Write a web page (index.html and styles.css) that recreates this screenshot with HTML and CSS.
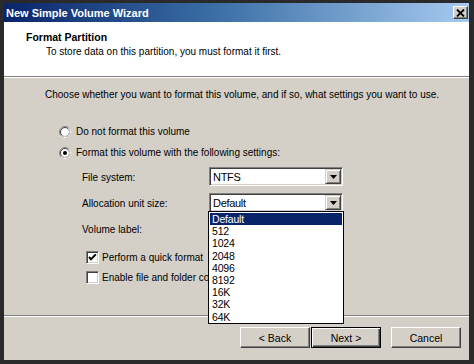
FILE: index.html
```html
<!DOCTYPE html>
<html lang="en">
  <head>
    <meta charset="UTF-8" />
    <title>New Simple Volume Wizard</title>
    <link rel="stylesheet" href="styles.css">
  </head>
  <body>
    <div class="window">
      <div class="titlebar">
        <span class="title">New Simple Volume Wizard</span>
        <span class="close">
          <svg width="9" height="8" viewBox="0 0 9 8"><path d="M1 0.5l7 7M8 0.5l-7 7" stroke="#000" stroke-width="1.8" /></svg>
        </span>
      </div>

      <div class="header">
        <div class="header-title">Format Partition</div>
        <div class="header-sub">To store data on this partition, you must format it first.</div>
      </div>

      <div class="content">
        <p class="intro">Choose whether you want to format this volume, and if so, what settings you want to use.</p>

        <div class="radio-row">
          <svg class="radio" width="12" height="12" viewBox="0 0 12 12">
            <circle cx="6" cy="6" r="5.5" fill="#fff" stroke="#808080" />
            <path d="M9.9 2.1A5.5 5.5 0 0 1 2.1 9.9" fill="none" stroke="#fff" />
            <circle cx="6" cy="6" r="4.5" fill="none" stroke="#404040" />
            <path d="M9.2 2.8A4.5 4.5 0 0 1 2.8 9.2" fill="none" stroke="#d4d0c8" />
          </svg>
          <span>Do not format this volume</span>
        </div>
        <div class="radio-row">
          <svg class="radio" width="12" height="12" viewBox="0 0 12 12">
            <circle cx="6" cy="6" r="5.5" fill="#fff" stroke="#808080" />
            <path d="M9.9 2.1A5.5 5.5 0 0 1 2.1 9.9" fill="none" stroke="#fff" />
            <circle cx="6" cy="6" r="4.5" fill="none" stroke="#404040" />
            <path d="M9.2 2.8A4.5 4.5 0 0 1 2.8 9.2" fill="none" stroke="#d4d0c8" />
            <circle cx="6" cy="6" r="2" fill="#000" />
          </svg>
          <span>Format this volume with the following settings:</span>
        </div>

        <div class="settings">
          <label>File system:</label>
          <div class="combo">
            <span class="combo-text">NTFS</span>
            <span class="combo-btn"><svg width="7" height="4" viewBox="0 0 7 4"><path d="M0 0h7L3.5 4z" fill="#000" /></svg></span>
          </div>

          <label>Allocation unit size:</label>
          <div class="combo">
            <span class="combo-text">Default</span>
            <span class="combo-btn"><svg width="7" height="4" viewBox="0 0 7 4"><path d="M0 0h7L3.5 4z" fill="#000" /></svg></span>
            <ul class="dropdown">
              <li class="selected">Default</li>
              <li>512</li>
              <li>1024</li>
              <li>2048</li>
              <li>4096</li>
              <li>8192</li>
              <li>16K</li>
              <li>32K</li>
              <li>64K</li>
            </ul>
          </div>

          <label>Volume label:</label>
          <div class="textbox"></div>
        </div>

        <div class="check-row first">
          <span class="checkbox">
            <svg width="9" height="9" viewBox="0 0 9 9"><path d="M1 4l2 2.2L7.8 1.4" fill="none" stroke="#000" stroke-width="2" /></svg>
          </span>
          <span>Perform a quick format</span>
        </div>
        <div class="check-row">
          <span class="checkbox"></span>
          <span class="clipped">Enable file and folder compression</span>
        </div>
      </div>

      <div class="footer">
        <button class="btn">&lt; Back</button>
        <button class="btn default">Next &gt;</button>
        <button class="btn cancel">Cancel</button>
      </div>
    </div>
  </body>
</html>
```

FILE: styles.css
```css
:root {
  --face: #d4d0c8;
  --shadow: #808080;
  --dark: #404040;
  --highlight: #0a246a;
}
body {
  margin: 0;
  background: #262626;
  font-family: "Liberation Sans", Arial, sans-serif;
  font-size: 10px;
  color: #000;
}
.window {
  width: 474px;
  height: 364px;
  box-sizing: border-box;
  padding: 3px 5px 4px 4px;
  background: #2a2a2a;
  display: flex;
  flex-direction: column;
}
.titlebar {
  height: 19px;
  flex: none;
  display: flex;
  align-items: center;
  justify-content: space-between;
  padding: 0 1px 0 2px;
  background: linear-gradient(90deg, #0a246a 0%, #3a6ea5 45%, #a6caf0 100%);
  color: #fff;
  font-weight: bold;
  font-size: 11px;
}
.close {
  width: 15px;
  height: 13px;
  box-sizing: border-box;
  display: flex;
  align-items: center;
  justify-content: center;
  background: var(--face);
  border: 1px solid;
  border-color: #fff var(--dark) var(--dark) #fff;
  box-shadow: inset -1px -1px 0 var(--shadow);
}
.header {
  height: 55px;
  flex: none;
  box-sizing: border-box;
  background: #fff;
  padding: 9px 0 0 22px;
  border-bottom: 1px solid var(--shadow);
}
.header-title {
  font-weight: bold;
  font-size: 10.5px;
  line-height: 12px;
}
.header-sub {
  line-height: 12px;
  margin: 3px 0 0 20px;
}
.content {
  flex: none;
  height: 239px;
  box-sizing: border-box;
  background: var(--face);
  border-top: 1px solid #fff;
  border-bottom: 1px solid var(--shadow);
  padding-top: 11px;
}
.intro {
  margin: 0 0 20px 41px;
  line-height: 12px;
}
.radio-row {
  height: 21px;
  display: flex;
  align-items: center;
  gap: 5px;
  padding-left: 55px;
}
.radio {
  flex: none;
}
.settings {
  display: grid;
  grid-template-columns: 127px 134px;
  grid-auto-rows: 19px;
  row-gap: 7px;
  align-items: center;
  padding-left: 78px;
  margin-top: 4px;
}
.settings label {
  padding-top: 1px;
}
.combo,
.textbox {
  position: relative;
  height: 19px;
  box-sizing: border-box;
  background: #fff;
  border: 1px solid;
  border-color: var(--shadow) #fff #fff var(--shadow);
  box-shadow: inset 1px 1px 0 var(--dark), inset -1px -1px 0 var(--face);
  display: flex;
  align-items: center;
}
.combo-text {
  flex: 1;
  padding-left: 3px;
  font-size: 11px;
  letter-spacing: -0.3px;
}
.combo-btn {
  width: 16px;
  height: 15px;
  margin-right: 1px;
  box-sizing: border-box;
  display: flex;
  align-items: center;
  justify-content: center;
  background: var(--face);
  border: 1px solid;
  border-color: var(--face) var(--dark) var(--dark) var(--face);
  box-shadow: inset 1px 1px 0 #fff, inset -1px -1px 0 var(--shadow);
}
.dropdown {
  position: absolute;
  top: 17px;
  left: -2px;
  width: 136px;
  height: 113px;
  box-sizing: border-box;
  margin: 0;
  padding: 1px;
  list-style: none;
  background: #fff;
  border: 1px solid #000;
  z-index: 2;
}
.dropdown li {
  height: 12.2px;
  line-height: 12.2px;
  padding-left: 2px;
  font-size: 10.5px;
  letter-spacing: -0.2px;
  overflow: hidden;
}
.dropdown li.selected {
  background: var(--highlight);
  color: #fff;
}
.check-row {
  display: flex;
  align-items: center;
  gap: 3px;
  height: 16px;
  padding-left: 82px;
  margin-top: 4px;
}
.check-row.first {
  margin-top: 11px;
}
.clipped {
  max-width: 106px;
  overflow: hidden;
  white-space: nowrap;
}
.checkbox {
  width: 13px;
  height: 13px;
  box-sizing: border-box;
  flex: none;
  background: #fff;
  border: 1px solid;
  border-color: var(--shadow) #fff #fff var(--shadow);
  box-shadow: inset 1px 1px 0 var(--dark), inset -1px -1px 0 var(--face);
  display: flex;
  align-items: center;
  justify-content: center;
}
.footer {
  flex: 1;
  background: var(--face);
  border-top: 1px solid #fff;
  display: flex;
  justify-content: flex-end;
  align-items: flex-start;
  padding: 10px 8px 0 0;
}
.btn {
  width: 70px;
  height: 21px;
  padding: 0;
  font-family: inherit;
  font-size: 10.5px;
  color: #000;
  background: var(--face);
  border: 1px solid;
  border-color: #fff var(--dark) var(--dark) #fff;
  box-shadow: inset -1px -1px 0 var(--shadow);
}
.btn.default {
  margin-left: 1px;
  border: 1px solid #000;
  box-shadow: inset 1px 1px 0 #fff, inset -1px -1px 0 var(--dark), inset -2px -2px 0 var(--shadow);
}
.btn.cancel {
  margin-left: 10px;
}
```
